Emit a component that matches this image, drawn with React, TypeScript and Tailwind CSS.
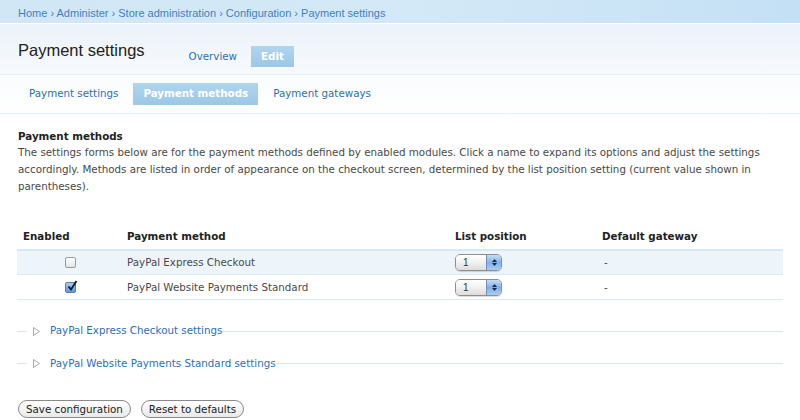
import React from "react";

const verdana = { fontFamily: '"DejaVu Sans", Verdana, sans-serif' };
const lucida = { fontFamily: '"Liberation Sans", Arial, sans-serif' };

function Select() {
  return (
    <div className="flex h-[17px] w-[47px] overflow-hidden rounded-[5px] border border-[#8e8e8e] shadow-[0_1px_1px_rgba(0,0,0,0.15)]">
      <div className="flex flex-1 items-center bg-gradient-to-b from-white via-[#f1f1f1] to-[#dcdcdc] pl-[7px] text-[10px] text-[#333]" style={lucida}>
        1
      </div>
      <div className="flex w-[15px] flex-col items-center justify-center gap-[1px] border-l border-[#6f8fb8] bg-gradient-to-b from-[#c8ddf5] via-[#7fb0ec] to-[#a9cdf3]">
        <svg width="5" height="3" viewBox="0 0 5 3"><path d="M2.5 0 L5 3 L0 3 Z" fill="#1b2a40" /></svg>
        <svg width="5" height="3" viewBox="0 0 5 3"><path d="M0 0 L5 0 L2.5 3 Z" fill="#1b2a40" /></svg>
      </div>
    </div>
  );
}

function Checkbox({ checked }: { checked?: boolean }) {
  if (checked) {
    return (
      <div className="relative h-[11px] w-[11px] rounded-[2px] border border-[#5a7fae] bg-gradient-to-b from-[#a9cbf0] to-[#5f97dc]">
        <svg className="absolute left-[1px] top-[-3px]" width="11" height="12" viewBox="0 0 11 12">
          <path d="M1.5 6.5 L4 9.5 L9.5 1" stroke="#101820" strokeWidth="1.8" fill="none" />
        </svg>
      </div>
    );
  }
  return <div className="h-[11px] w-[11px] rounded-[2px] border border-[#9a9a9a] bg-gradient-to-b from-white to-[#e6e6e6]" />;
}

function Fieldset({ title }: { title: string }) {
  return (
    <div className="flex items-center">
      <div className="h-px w-[10px] bg-[#d4e6f4]" />
      <svg className="ml-[6px]" width="7" height="9" viewBox="0 0 7 9">
        <path d="M0.5 0.5 L6.5 4.5 L0.5 8.5 Z" fill="none" stroke="#a9a9a9" strokeWidth="1" />
      </svg>
      <span className="ml-[10px] text-[#2d6fb8]">{title}</span>
      <div className="h-px flex-1 bg-[#d4e6f4]" />
    </div>
  );
}

export default function App() {
  return (
    <div className="h-[420px] w-[800px] overflow-hidden bg-white text-[#494949]" style={verdana}>
      {/* Breadcrumb */}
      <div className="h-[24px] border-b border-white bg-gradient-to-r from-[#d2e7f6] via-[#d4e9f7] to-[#c4e0f5] pl-[18px] pt-[5px] text-[11px] text-[#3f80c4]" style={lucida}>
        Home › Administer › Store administration › Configuration › Payment settings
      </div>

      {/* Title and primary tabs */}
      <div className="flex h-[51px] items-start border-b border-[#e8eef4] bg-gradient-to-b from-[#ebf2f9] to-[#f7fafd] pl-[18px]">
        <h1 className="mt-[14px] text-[16.5px] text-[#222]" style={lucida}>Payment settings</h1>
        <div className="ml-[44px] mt-[22px] flex items-center text-[10.3px]">
          <span className="text-[#2d6fb8]">Overview</span>
          <span className="ml-[14px] bg-gradient-to-b from-[#b0d5ee] to-[#9cc7e6] px-[10px] py-[3px] font-bold text-white">Edit</span>
        </div>
      </div>

      {/* Secondary tabs */}
      <div className="flex h-[39px] items-center border-b border-[#e4edf5] bg-gradient-to-b from-[#f9fbfd] to-white pl-[29px] text-[10.3px]">
        <span className="text-[#2d6fb8]">Payment settings</span>
        <span className="ml-[15px] bg-gradient-to-b from-[#b0d5ee] to-[#9cc7e6] px-[10px] py-[3px] font-bold text-white">Payment methods</span>
        <span className="ml-[15px] text-[#2d6fb8]">Payment gateways</span>
      </div>

      {/* Content */}
      <div className="px-[17px] pt-[15px] text-[10.3px]">
        <div className="pl-[1px] font-bold text-[#222]">Payment methods</div>
        <p className="pl-[1px] leading-[17px]">
          The settings forms below are for the payment methods defined by enabled modules. Click a name to expand its options and adjust the settings accordingly. Methods are listed in order of appearance on the checkout screen, determined by the list position setting (current value shown in parentheses).
        </p>

        <table className="mt-[34px] w-full border-collapse text-[10.3px]">
          <thead>
            <tr className="border-b-2 border-[#d5e8f5] text-left text-[#222]">
              <th className="w-[110px] pb-[4px] pl-[6px] font-bold">Enabled</th>
              <th className="w-[328px] pb-[4px] font-bold">Payment method</th>
              <th className="w-[147px] pb-[4px] font-bold">List position</th>
              <th className="pb-[4px] font-bold">Default gateway</th>
            </tr>
          </thead>
          <tbody>
            <tr className="h-[25px] border-b border-[#dde8f1] bg-[#edf5fa]">
              <td className="pl-[48px]"><Checkbox /></td>
              <td>PayPal Express Checkout</td>
              <td><Select /></td>
              <td className="pl-[2px]">-</td>
            </tr>
            <tr className="h-[25px] border-b border-[#dde8f1]">
              <td className="pl-[48px]"><Checkbox checked /></td>
              <td>PayPal Website Payments Standard</td>
              <td><Select /></td>
              <td className="pl-[2px]">-</td>
            </tr>
          </tbody>
        </table>

        <div className="mt-[23px] flex flex-col gap-[17px]">
          <Fieldset title="PayPal Express Checkout settings" />
          <Fieldset title="PayPal Website Payments Standard settings" />
        </div>

        <div className="mt-[29px] flex gap-[10px] pl-[1px]">
          <button className="h-[18px] rounded-full border border-[#8a8a8a] bg-gradient-to-b from-white to-[#e9e9e9] px-[7px] text-[10.3px] leading-[15px] text-[#222]" style={verdana}>
            Save configuration
          </button>
          <button className="h-[18px] rounded-full border border-[#8a8a8a] bg-gradient-to-b from-white to-[#e9e9e9] px-[7px] text-[10.3px] leading-[15px] text-[#222]" style={verdana}>
            Reset to defaults
          </button>
        </div>
      </div>
    </div>
  );
}
